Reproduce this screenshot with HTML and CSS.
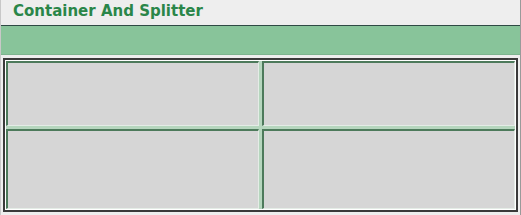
FILE: index.html
```html
<!DOCTYPE html>
<html>
<head>
<title>Container And Splitter</title>
<meta charset="utf-8">
<link rel="stylesheet" href="styles.css">
</head>
<body>
<div class="page">
	<div class="title">Container And Splitter</div>
	<div class="bar"></div>
	<div class="box">
		<div class="pane"></div>
		<div class="pane"></div>
		<div class="pane"></div>
		<div class="pane"></div>
	</div>
</div>
</body>
</html>
```
FILE: styles.css
```css
body, div { margin: 0; padding: 0; }
body { background: #eeeeee; font-family: "DejaVu Sans", Verdana, sans-serif; }
.page { height: 215px; border-left: 1px solid #c8c8c8; border-right: 1px solid #9a9a9a; }
.title { height: 25px; line-height: 23px; padding-left: 12px; font-size: 15px; font-weight: bold; color: #2a8649; }
.bar { height: 28px; background: #88c49a; border-top: 1px solid #2f4a44; border-bottom: 1px solid #7db48f; margin-bottom: 3px; }
.box { height: 154px; box-sizing: border-box; margin: 0 2px; border: 2px solid #3a3a3a; padding: 1px; background: #b6d6be; box-shadow: inset 0 0 0 1px #fff;
display: grid; grid-template-columns: 1fr 1fr; grid-template-rows: 65px 1fr; gap: 3px; }
.pane { background: #d6d6d6; border-top: 2px solid #4d7a5b; border-left: 2px solid #4d7a5b; border-right: 1px solid #e4ece6; border-bottom: 1px solid #e4ece6; }
```
